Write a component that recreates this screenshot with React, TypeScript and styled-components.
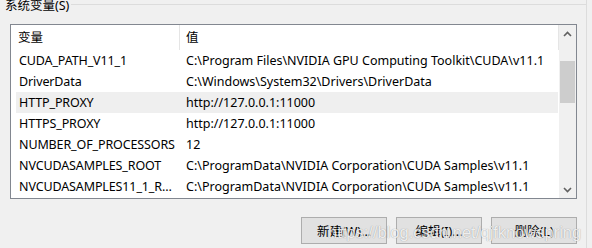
import styled, { createGlobalStyle } from 'styled-components'

const GlobalStyle = createGlobalStyle`
  html, body {
    margin: 0;
    padding: 0;
    background: #f0f0f0;
    overflow: hidden;
  }
  body {
    font-family: "Noto Sans", "Noto Sans CJK SC", sans-serif;
    font-size: 12.5px;
    color: #000;
  }
`

const Frame = styled.div`
  margin-left: -3px;
  width: 590px;
  height: 260px;
  border-right: 1px solid #dcdcdc;
  box-sizing: border-box;
`

const LegendRow = styled.div`
  display: flex;
  align-items: flex-start;
  height: 13px;
`

const Legend = styled.div`
  padding: 0 2px 0 8px;
  margin-top: -2px;
  line-height: 16px;
  white-space: nowrap;
`

const Rule = styled.div`
  flex: 1;
  height: 1px;
  margin-top: 4px;
  background: #dcdcdc;
`

const ListBox = styled.div`
  margin: 11px 0 0 13px;
  width: 567px;
  height: 175px;
  box-sizing: border-box;
  border: 1px solid #828790;
  background: #fff;
  display: flex;
`

const Content = styled.div`
  flex: 1;
  min-width: 0;
  display: flex;
  flex-direction: column;
`

const Header = styled.div`
  display: flex;
  height: 25px;
  padding-left: 5px;
  border-right: 1px solid #e5e5e5;
`

const HeadCell = styled.div<{ $w?: number }>`
  ${p => (p.$w ? `width: ${p.$w}px; flex: none;` : 'flex: 1;')}
  box-sizing: border-box;
  padding-left: ${p => (p.$w ? 2 : 6)}px;
  line-height: 25px;
  border-right: ${p => (p.$w ? '1px solid #e5e5e5' : 'none')};
`

const Rows = styled.div`
  padding-left: 5px;
  margin-right: 1px;
`

const Row = styled.div<{ $hot?: boolean }>`
  display: flex;
  height: 21px;
  line-height: 21px;
  background: ${p => (p.$hot ? '#efefef' : 'transparent')};
`

const NameCell = styled.div`
  width: 164px;
  flex: none;
  box-sizing: border-box;
  padding: 0 1px 0 3px;
  letter-spacing: -0.12px;
  white-space: nowrap;
  overflow: hidden;
  text-overflow: ellipsis;
`

const ValueCell = styled.div`
  flex: 1;
  min-width: 0;
  padding-left: 6px;
  white-space: nowrap;
  overflow: hidden;
`

const ScrollBar = styled.div`
  width: 17px;
  flex: none;
  background: #f0f0f0;
  display: flex;
  flex-direction: column;
`

const ArrowButton = styled.div`
  height: 17px;
  flex: none;
  display: flex;
  align-items: center;
  justify-content: center;
  color: #606060;
`

const Track = styled.div`
  flex: 1;
  display: flex;
  flex-direction: column;
  align-items: center;
`

const Thumb = styled.div`
  width: 15px;
  background: #cdcdcd;
`

const ButtonRow = styled.div`
  position: relative;
  display: flex;
  justify-content: flex-end;
  gap: 9px;
  margin: 18px 0 0 13px;
  width: 567px;
`

const Button = styled.div`
  width: 86px;
  height: 27px;
  box-sizing: border-box;
  border: 1px solid #adadad;
  background: #e1e1e1;
  display: flex;
  align-items: center;
  justify-content: center;
  white-space: nowrap;
`

const Watermark = styled.div`
  position: absolute;
  left: 318px;
  top: 5px;
  font-family: "Liberation Sans", Arial, sans-serif;
  font-size: 16.5px;
  line-height: 20px;
  color: rgba(255, 255, 255, 0.85);
  text-shadow: 0 0 1px rgba(0, 0, 0, 0.4);
  white-space: nowrap;
  pointer-events: none;
`

const Chevron = ({ up }: { up?: boolean }) => (
  <svg width="9" height="6" viewBox="0 0 9 6">
    <path
      d={up ? 'M1 5 L4.5 1.5 L8 5' : 'M1 1 L4.5 4.5 L8 1'}
      fill="none"
      stroke="currentColor"
      strokeWidth="1.6"
    />
  </svg>
)

const vars = [
  ['CUDA_PATH_V11_1', 'C:\\Program Files\\NVIDIA GPU Computing Toolkit\\CUDA\\v11.1'],
  ['DriverData', 'C:\\Windows\\System32\\Drivers\\DriverData'],
  ['HTTP_PROXY', 'http://127.0.0.1:11000'],
  ['HTTPS_PROXY', 'http://127.0.0.1:11000'],
  ['NUMBER_OF_PROCESSORS', '12'],
  ['NVCUDASAMPLES_ROOT', 'C:\\ProgramData\\NVIDIA Corporation\\CUDA Samples\\v11.1'],
  ['NVCUDASAMPLES11_1_ROOT', 'C:\\ProgramData\\NVIDIA Corporation\\CUDA Samples\\v11.1'],
]

const App = () => {
  const hotRow = 2
  const thumbTop = 19
  const thumbHeight = 42
  return (
    <>
      <GlobalStyle />
      <Frame>
        <LegendRow>
          <Legend>系统变量(S)</Legend>
          <Rule />
        </LegendRow>
        <ListBox>
          <Content>
            <Header>
              <HeadCell $w={164}>变量</HeadCell>
              <HeadCell>值</HeadCell>
            </Header>
            <Rows>
              {vars.map(([name, value], i) => (
                <Row key={name} $hot={i === hotRow}>
                  <NameCell>{name}</NameCell>
                  <ValueCell>{value}</ValueCell>
                </Row>
              ))}
            </Rows>
          </Content>
          <ScrollBar>
            <ArrowButton><Chevron up /></ArrowButton>
            <Track>
              <Thumb style={{ marginTop: thumbTop, height: thumbHeight }} />
            </Track>
            <ArrowButton><Chevron /></ArrowButton>
          </ScrollBar>
        </ListBox>
        <ButtonRow>
          <Button>新建(W)...</Button>
          <Button>编辑(I)...</Button>
          <Button>删除(L)</Button>
          <Watermark>https://blog.csdn.net/qjfknowspring</Watermark>
        </ButtonRow>
      </Frame>
    </>
  )
}

export default App
